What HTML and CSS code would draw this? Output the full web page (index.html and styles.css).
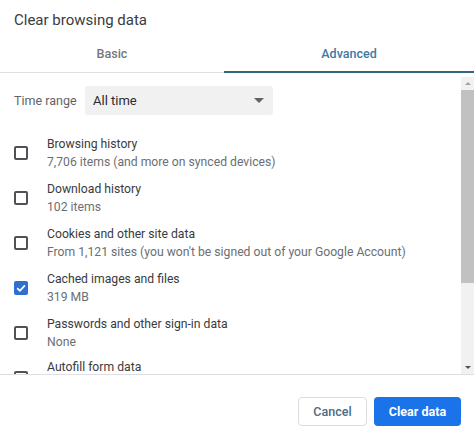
FILE: index.html
```html
<!DOCTYPE html>
<html>
<head>
<meta charset="utf-8">
<link rel="stylesheet" href="styles.css">
</head>
<body>
<div class="dialog">
  <div class="title">Clear browsing data</div>
  <div class="tabs">
    <div class="tab">Basic</div>
    <div class="tab active">Advanced</div>
  </div>
  <div class="scroll">
    <div class="content">
      <div class="range">
        <span class="range-label">Time range</span>
        <div class="select"><span>All time</span><span class="caret"></span></div>
      </div>
      <div class="row">
        <span class="box"></span>
        <div class="texts"><div class="t">Browsing history</div><div class="s">7,706 items (and more on synced devices)</div></div>
      </div>
      <div class="row">
        <span class="box"></span>
        <div class="texts"><div class="t">Download history</div><div class="s">102 items</div></div>
      </div>
      <div class="row">
        <span class="box"></span>
        <div class="texts"><div class="t">Cookies and other site data</div><div class="s">From 1,121 sites (you won't be signed out of your Google Account)</div></div>
      </div>
      <div class="row">
        <span class="box checked"><svg viewBox="0 0 14 14" width="14" height="14"><path d="M3.2 7.2 L5.9 9.8 L10.9 4.4" fill="none" stroke="#fff" stroke-width="1.8"/></svg></span>
        <div class="texts"><div class="t">Cached images and files</div><div class="s">319 MB</div></div>
      </div>
      <div class="row">
        <span class="box"></span>
        <div class="texts"><div class="t">Passwords and other sign-in data</div><div class="s">None</div></div>
      </div>
      <div class="row last">
        <span class="box"></span>
        <div class="texts"><div class="t">Autofill form data</div></div>
      </div>
    </div>
    <div class="sbar">
      <span class="arr up"></span>
      <div class="thumb"></div>
      <div class="rest"></div>
      <span class="arr down"></span>
    </div>
  </div>
  <div class="footer">
    <button class="btn cancel">Cancel</button>
    <button class="btn primary">Clear data</button>
  </div>
</div>
</body>
</html>
```

FILE: styles.css
```css
html, body {
  margin: 0;
  padding: 0;
  background: #fff;
}
body {
  font-family: Roboto, "Liberation Sans", sans-serif;
  color: #202124;
  width: 474px;
  height: 443px;
  overflow: hidden;
}
.dialog {
  display: flex;
  flex-direction: column;
}
.title {
  padding: 10px 0 0 14px;
  height: 20px;
  line-height: 20px;
  font-size: 15px;
  color: #3a3b3d;
}
.tabs {
  display: flex;
  margin-top: 6px;
  height: 36px;
  border-bottom: 1px solid #dedfe2;
}
.tab {
  flex: 0 0 224px;
  text-align: center;
  font-size: 12.5px;
  font-weight: 500;
  color: #74787c;
  line-height: 36px;
}
.tab.active {
  flex: 1 1 auto;
  color: #3d7aa4;
  border-bottom: 2px solid #336883;
  margin-bottom: -1px;
  line-height: 35px;
}
.scroll {
  display: flex;
  height: 301px;
  border-bottom: 1px solid #dedfe2;
}
.content {
  flex: 1 1 auto;
  overflow: hidden;
  padding-top: 13px;
}
.range {
  display: flex;
  align-items: center;
  height: 29px;
  padding-left: 14px;
  margin-bottom: 20px;
}
.range-label {
  width: 71px;
  font-size: 12.5px;
  color: #5f6368;
}
.select {
  width: 188px;
  height: 29px;
  background: #f1f1f1;
  border-radius: 3px;
  display: flex;
  align-items: center;
  justify-content: space-between;
  padding: 0 8px 0 8px;
  box-sizing: border-box;
  font-size: 13px;
  color: #2a2b2d;
}
.caret {
  width: 0;
  height: 0;
  border-left: 5px solid transparent;
  border-right: 5px solid transparent;
  border-top: 5px solid #5f6368;
  margin-right: 1px;
}
.row {
  display: flex;
  align-items: center;
  height: 36px;
  margin-bottom: 9px;
  padding-left: 14px;
}
.row.last {
  align-items: flex-start;
}
.row.last .box {
  margin-top: 11px;
}
.row.last .texts {
  padding-top: 1px;
}
.row.last .t {
  line-height: 12px;
}
.box {
  flex: 0 0 auto;
  width: 14px;
  height: 14px;
  box-sizing: border-box;
  border: 2px solid #505256;
  border-radius: 2px;
  margin-right: 19px;
  display: flex;
  align-items: center;
  justify-content: center;
}
.box.checked {
  background: #2f6fd0;
  border-color: #2f6fd0;
}
.box.checked svg {
  flex: 0 0 auto;
}
.texts {
  display: flex;
  flex-direction: column;
}
.t {
  font-size: 12.2px;
  line-height: 18px;
  color: #3a3b3d;
  white-space: nowrap;
}
.s {
  font-size: 12.2px;
  line-height: 18px;
  color: #6b6f73;
  white-space: nowrap;
}
.sbar {
  flex: 0 0 13px;
  width: 13px;
  display: flex;
  flex-direction: column;
  align-items: center;
  background: #f1f1f1;
  margin-top: 4px;
}
.arr {
  width: 0;
  height: 0;
  border-left: 3px solid transparent;
  border-right: 3px solid transparent;
  margin: 5px 0;
}
.arr.up {
  border-bottom: 3px solid #a3a3a3;
}
.arr.down {
  border-top: 3px solid #505050;
}
.thumb {
  width: 13px;
  height: 193px;
  background: #c1c1c1;
}
.rest {
  flex: 1 1 auto;
}
.footer {
  display: flex;
  justify-content: flex-end;
  gap: 7px;
  padding: 22px 13px 0 0;
}
.btn {
  height: 29px;
  border-radius: 4px;
  font-family: Roboto, "Liberation Sans", sans-serif;
  font-size: 12.5px;
  font-weight: 500;
  padding: 0;
  cursor: pointer;
}
.cancel {
  width: 69px;
  background: #fff;
  border: 1px solid #dadce0;
  color: #4a6b85;
}
.primary {
  width: 87px;
  background: #1a73e8;
  border: none;
  color: #fff;
  font-weight: 700;
}
```
